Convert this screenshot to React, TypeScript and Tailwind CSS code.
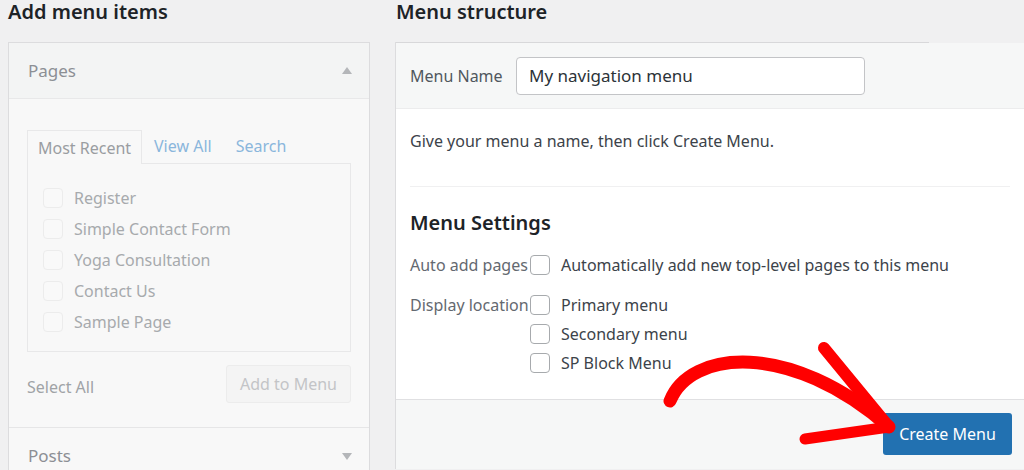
const pages = ["Register", "Simple Contact Form", "Yoga Consultation", "Contact Us", "Sample Page"];

const locations = ["Primary menu", "Secondary menu", "SP Block Menu"];

function Box({ faded = false }: { faded?: boolean }) {
  return (
    <span
      className={`block w-5 h-5 shrink-0 rounded-[4px] border ${
        faded ? "border-[#ececec] bg-[#f9f9f9]" : "border-[#a7aaad] bg-white"
      }`}
    />
  );
}

function LeftPanel() {
  return (
    <div className="w-[362px] shrink-0">
      <h2 className="h-[42px] text-[20px] leading-[24px] font-semibold text-[#1d2327]">Add menu items</h2>
      <div className="border border-[#dcdcde] bg-[#f8f8f8]">
        <div className="h-[56px] flex items-center justify-between pl-[19px] pr-[17px] bg-[#f3f4f4] border-b border-[#e8e8e9]">
          <span className="text-[17px] text-[#8c8f94]">Pages</span>
          <span className="w-0 h-0 border-x-[5px] border-x-transparent border-b-[7px] border-b-[#b4b6b9]" />
        </div>
        <div className="px-[18px] pt-[30px] pb-[24px] border-b border-[#e6e6e7]">
          <div className="flex items-end text-[16px] leading-[20px]">
            <div className="relative z-10 -mb-px w-[115px] h-[34px] flex items-center pl-[10px] border border-b-0 border-[#e8e8e9] bg-[#f8f8f8] text-[#9a9da1]">
              Most Recent
            </div>
            <span className="h-[34px] flex items-center ml-[12px] text-[#8ab6dc]">View All</span>
            <span className="h-[34px] flex items-center ml-[24px] text-[#8ab6dc]">Search</span>
          </div>
          <div className="h-[189px] border border-[#e8e8e9] pt-[24px] pl-[15px] flex flex-col gap-[11px]">
            {pages.map((p) => (
              <label key={p} className="flex items-center gap-[11px] text-[16px] leading-[20px] text-[#a7aaad]">
                <Box faded />
                {p}
              </label>
            ))}
          </div>
          <div className="flex items-center justify-between mt-[13px]">
            <span className="text-[16px] text-[#a0a3a6] pt-[5px]">Select All</span>
            <button
              type="button"
              className="w-[125px] h-[38px] rounded-[3px] border border-[#ececec] bg-[#f4f4f4] text-[16px] text-[#c3c4c7]"
            >
              Add to Menu
            </button>
          </div>
        </div>
        <div className="h-[56px] flex items-center justify-between pl-[19px] pr-[17px] bg-[#f8f8f8]">
          <span className="text-[17px] text-[#8c8f94]">Posts</span>
          <span className="w-0 h-0 border-x-[5px] border-x-transparent border-t-[7px] border-t-[#b4b6b9]" />
        </div>
      </div>
    </div>
  );
}

function RightPanel() {
  return (
    <div className="flex-1 min-w-0">
      <h2 className="h-[42px] text-[20px] leading-[24px] font-semibold text-[#1d2327] pl-px">Menu structure</h2>
      <div className="border-l border-[#dcdcde]">
        <div className="w-[533px] h-px bg-[#d8d8da]" />
        <div className="h-[66px] flex items-center pl-[14px] bg-[#f6f7f7] border-b border-[#ececed]">
          <span className="text-[16px] text-[#50575e] w-[106px]">Menu Name</span>
          <div className="w-[349px] h-[38px] flex items-center pl-[12px] rounded-[4px] border border-[#c3c4c7] bg-white text-[17px] text-[#2c3338]">
            My navigation menu
          </div>
        </div>
        <div className="h-[290px] bg-white px-[14px] pt-[21px]">
          <p className="text-[16px] leading-[22px] text-[#3c434a]">Give your menu a name, then click Create Menu.</p>
          <div className="h-px bg-[#f0f0f1] mt-[34px]" />
          <h3 className="mt-[22px] text-[20px] leading-[28px] font-semibold text-[#1d2327]">Menu Settings</h3>
          <div className="mt-[17px] flex items-center text-[16px] leading-[22px]">
            <span className="w-[120px] text-[#646970]">Auto add pages</span>
            <Box />
            <span className="ml-[11px] text-[#3c434a]">Automatically add new top-level pages to this menu</span>
          </div>
          <div className="mt-[19px] flex items-start text-[16px] leading-[22px]">
            <span className="w-[120px] text-[#646970] -mt-[1px]">Display location</span>
            <div className="flex flex-col gap-[9px]">
              {locations.map((l) => (
                <label key={l} className="flex items-center h-[20px]">
                  <Box />
                  <span className="ml-[11px] text-[#3c434a]">{l}</span>
                </label>
              ))}
            </div>
          </div>
        </div>
        <div className="h-[70px] bg-[#f6f7f7] border-t border-[#e0e0e2] flex justify-end items-start pt-[13px] pr-[12px]">
          <button
            type="button"
            className="w-[129px] h-[42px] rounded-[3px] bg-[#2271b1] text-white text-[16px]"
          >
            Create Menu
          </button>
        </div>
      </div>
    </div>
  );
}

export default function App() {
  return (
    <div
      className="relative w-[1024px] h-[470px] overflow-hidden bg-[#f0f0f1] flex gap-[25px] pl-[8px]"
      style={{ fontFamily: '"Noto Sans", "Open Sans", sans-serif' }}
    >
      <LeftPanel />
      <RightPanel />
      {/* red annotation arrow */}
      <svg className="absolute inset-0 pointer-events-none" width="1024" height="470" viewBox="0 0 1024 470">
        <g fill="none" stroke="#ff0000" strokeLinecap="round" strokeLinejoin="round">
          <path d="M670 401 C 690 350, 790 340, 889 427" strokeWidth="13" />
          <path d="M824 348 L 889 427" strokeWidth="12" />
          <path d="M805 439 L 889 427" strokeWidth="11" />
        </g>
      </svg>
    </div>
  );
}
